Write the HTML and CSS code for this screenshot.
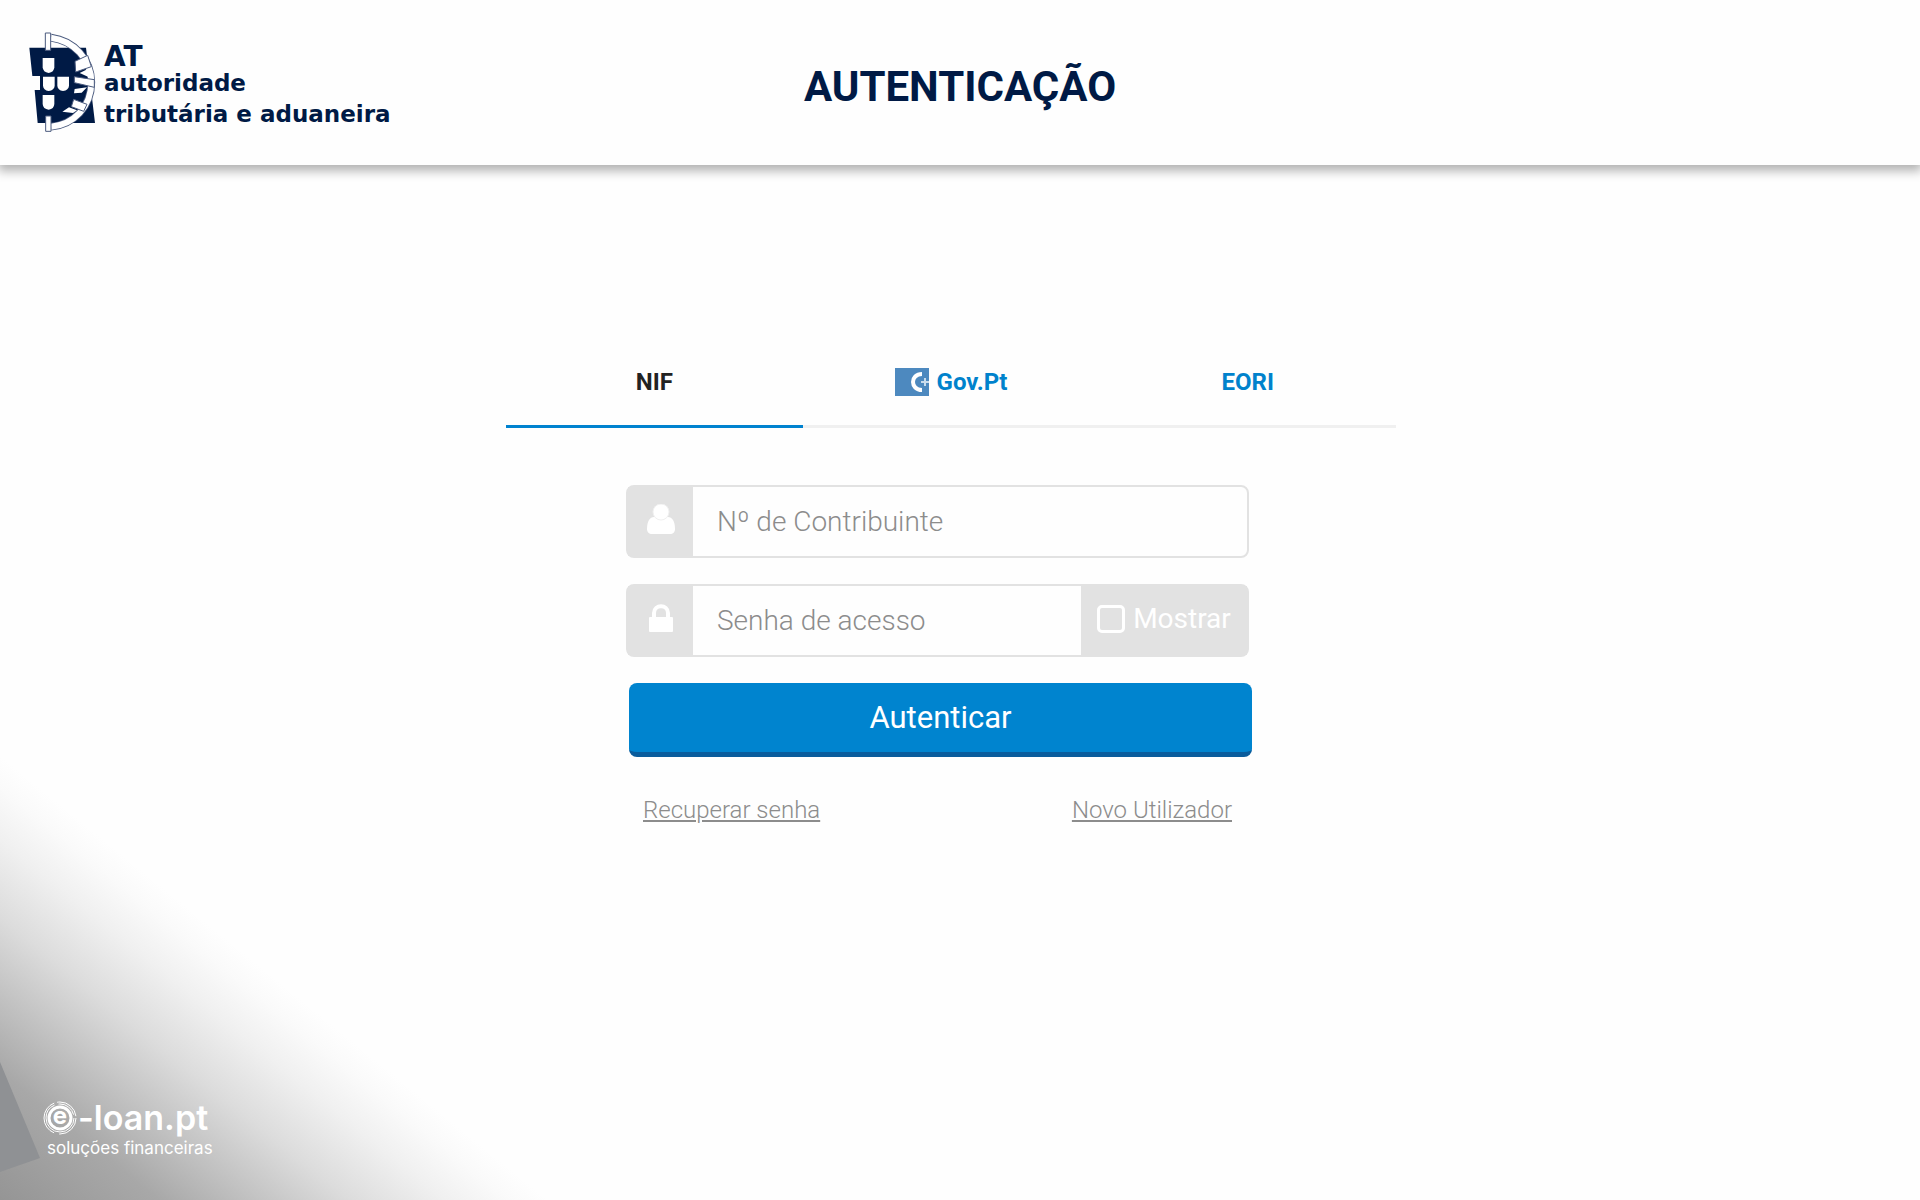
FILE: index.html
```html
<!DOCTYPE html>
<html lang="pt">
<head>
    <meta charset="UTF-8">
    <meta name="viewport" content="width=device-width, initial-scale=1.0">
    <title>Autenticação</title>
    <link rel="stylesheet" href="styles.css">
</head>
<body>
    <header class="header">
        <a href="#" class="logo">
            <svg class="logo-emblem" viewBox="88 96 204 303" aria-hidden="true">
                <path fill="#001a45" d="M89 143H259L286 369H114L105 270H121V228H98Z"/>
                <!-- shields -->
                <g fill="#fff">
                    <path d="M129 174H164V202Q163 217 147 219Q130 217 129 202Z"/>
                    <path d="M130 230H165V257Q164 270 147 273Q131 270 130 257Z"/>
                    <path d="M173 230H208V257Q207 270 190 273Q174 270 173 257Z"/>
                    <path d="M129 285H164V312Q163 327 147 329Q130 327 129 312Z"/>
                </g>
                <!-- armillary sphere -->
                <g fill="none">
                    <path stroke="#4a5a7e" stroke-width="23" d="M154 113C222 122 275 178 275 247C275 320 222 374 154 380"/>
                    <path stroke="#fff" stroke-width="18" d="M154 113C222 122 275 178 275 247C275 320 222 374 154 380"/>
                </g>
                <g fill="#fff" stroke="#4a5a7e" stroke-width="3">
                    <path d="M226 184L264 166L275 200L228 216Z"/>
                    <path d="M224 230L284 239V262L224 248Z"/>
                    <path d="M222 298L262 313L252 334L215 320Z"/>
                    <path d="M137 99H153V151H137Z"/>
                    <path d="M138 348H154V394H138Z"/>
                </g>
                <path fill="#fff" d="M240 219L263 208L268 232ZM225 267L262 262L246 278L223 280ZM188 335L208 322L232 331L220 339Z"/>
            </svg>
            <span class="logo-text">
                <span class="logo-at">AT</span>
                <span class="logo-name">autoridade</span>
                <span class="logo-name logo-last">tributária e aduaneira</span>
            </span>
        </a>
        <h1>AUTENTICAÇÃO</h1>
    </header>

    <main class="panel">
        <nav class="tabs">
            <a href="#nif" class="tab active">NIF</a>
            <a href="#gov" class="tab">
                <svg width="34" height="28" viewBox="0 0 34 28" aria-hidden="true">
                    <rect width="34" height="28" fill="#4d89bf"/>
                    <path d="M27 6C15 6 15 22 27 22" fill="none" stroke="#fff" stroke-width="4"/>
                    <path d="M26 14H34M30 10V18" stroke="#c9dcec" stroke-width="2"/>
                </svg>
                Gov.Pt
            </a>
            <a href="#eori" class="tab">EORI</a>
        </nav>

        <form class="login" action="#">
            <div class="field">
                <label class="addon" for="nif" aria-label="Nº de Contribuinte">
                    <svg width="28" height="30" viewBox="0 0 28 30" aria-hidden="true">
                        <path fill="#fff" d="M7 13C3 13 0 17 0 25C0 28 2 30 5 30H23C26 30 28 28 28 25C28 17 25 13 21 13Z"/>
                        <circle cx="14" cy="8" r="8" fill="#fff" stroke="#f0f0f0" stroke-width="1"/>
                    </svg>
                </label>
                <input type="text" id="nif" placeholder="Nº de Contribuinte">
            </div>
            <div class="field">
                <label class="addon" for="senha" aria-label="Senha de acesso">
                    <svg width="24" height="28" viewBox="0 0 24 28" aria-hidden="true">
                        <path d="M5 14V9C5 0 19 0 19 9V14" fill="none" stroke="#fff" stroke-width="4"/>
                        <rect y="13" width="24" height="15" rx="1" fill="#fff"/>
                    </svg>
                </label>
                <input type="password" id="senha" placeholder="Senha de acesso">
                <label class="show">
                    <input type="checkbox" id="mostrar">
                    Mostrar
                </label>
            </div>
            <button type="submit">Autenticar</button>
            <div class="links">
                <a href="#">Recuperar senha</a>
                <a href="#">Novo Utilizador</a>
            </div>
        </form>
    </main>

    <footer class="footer">
        <svg class="corner" width="40" height="110" viewBox="0 0 40 110" aria-hidden="true">
            <path fill="#8f9194" d="M0 0L40 96L0 110Z"/>
        </svg>
        <div class="brand">
            <div class="brand-name">
                <svg width="36" height="36" viewBox="0 0 36 36" aria-hidden="true">
                    <g fill="none" stroke="#fff">
                        <circle cx="18" cy="18" r="11" stroke-width="3"/>
                        <circle cx="18" cy="18" r="14" stroke-width="1" stroke-dasharray="60 4 20 4"/>
                        <circle cx="18" cy="18" r="16" stroke-width="1" stroke-dasharray="26 5 38 3"/>
                    </g>
                    <text x="18" y="24" class="brand-e">e</text>
                </svg>
                <span>-loan.pt</span>
            </div>
            <div class="brand-sub">soluções financeiras</div>
        </div>
    </footer>

    <script>
        // show or hide the password
        document.getElementById('mostrar').addEventListener('change', function () {
            document.getElementById('senha').type = this.checked ? 'text' : 'password';
        });
    </script>
</body>
</html>
```
FILE: styles.css
```css
* {
    box-sizing: border-box;
}

body {
    margin: 0;
    min-height: 100vh;
    display: flex;
    flex-direction: column;
    font-family: Roboto, sans-serif;
    background: linear-gradient(39deg, #959595 0, #a8a8a8 100px, #c2c2c2 160px, #dcdcdc 220px, #f0f0f0 280px, #fafafa 320px, #fefefe 345px);
}

.header {
    display: grid;
    grid-template-columns: 1fr auto 1fr;
    padding: 32px 29px;
    height: 165px;
    background-color: #fefefe;
    box-shadow: 0 4px 10px 2px rgba(0, 0, 0, 0.3);
}

.header h1 {
    margin: 31px 0 0;
    font-size: 42px;
    line-height: 48px;
    font-weight: 700;
    color: #001a45;
}

.logo {
    display: flex;
    gap: 7px;
    color: #001a45;
    text-decoration: none;
}

.logo-emblem {
    width: 68px;
    height: 101px;
}

.logo-text {
    display: flex;
    flex-direction: column;
    padding-top: 10px;
    font-family: "DejaVu Sans", sans-serif;
    font-weight: 700;
    white-space: nowrap;
}

.logo-at {
    font-size: 28px;
    line-height: 30px;
}

.logo-name {
    font-size: 23px;
    line-height: 22px;
}

.logo-last {
    margin-top: 9px;
}

.panel {
    width: 100%;
    max-width: 908px;
    margin: 0 auto;
    padding: 182px 18px 0 0;
}

.tabs {
    display: flex;
    margin-bottom: 57px;
}

.tab {
    flex: 1;
    display: flex;
    align-items: center;
    justify-content: center;
    gap: 8px;
    height: 81px;
    padding-bottom: 9px;
    border-bottom: 3px solid #f0f0f0;
    color: #0082cc;
    font-size: 24px;
    font-weight: 700;
    text-decoration: none;
}

.tab.active {
    color: #222;
    border-bottom-color: #0082cf;
}

.login {
    margin: 0 147px 0 120px;
}

.field {
    display: flex;
    height: 73px;
    margin-bottom: 26px;
    border: 2px solid #e2e2e2;
    border-radius: 8px;
    background-color: #fefefe;
}

.addon,
.show {
    display: flex;
    align-items: center;
    justify-content: center;
    background-color: #e2e2e2;
}

.addon {
    width: 65px;
    padding-bottom: 5px;
}

.field input[type="text"],
.field input[type="password"] {
    flex: 1;
    min-width: 0;
    padding: 0 24px;
    border: none;
    outline: none;
    background: none;
    font-family: inherit;
    font-size: 28px;
    font-weight: 300;
}

.field input::placeholder {
    color: #8c8c8c;
}

.show {
    width: 166px;
    gap: 8px;
    padding-bottom: 4px;
    color: #fff;
    font-size: 28px;
}

.show input {
    appearance: none;
    width: 28px;
    height: 28px;
    margin: 0;
    border: 3px solid #fff;
    border-radius: 5px;
}

.show input:checked {
    background-color: #0082cf;
}

.login button {
    display: block;
    width: 100%;
    height: 74px;
    margin-left: 3px;
    border: none;
    border-bottom: 5px solid #0a5c9c;
    border-radius: 8px;
    background-color: #0084cf;
    color: #fff;
    font-family: inherit;
    font-size: 31px;
    cursor: pointer;
}

.links {
    display: flex;
    justify-content: space-between;
    padding: 39px 17px 0;
    font-size: 24px;
    line-height: 28px;
    font-weight: 300;
}

.links a {
    color: #8c8c8c;
}

.footer {
    position: relative;
    margin-top: auto;
    padding: 0 42px 42px;
    color: #fff;
}

.corner {
    position: absolute;
    left: 0;
    bottom: 28px;
}

.brand {
    position: relative;
    font-family: Inter, sans-serif;
}

.brand-name {
    display: flex;
    align-items: center;
    font-size: 34px;
    line-height: 36px;
    font-weight: 600;
}

.brand-e {
    fill: #fff;
    font-size: 24px;
    font-weight: 700;
    text-anchor: middle;
}

.brand-sub {
    padding: 2px 0 0 5px;
    font-size: 17px;
    line-height: 20px;
}
```
